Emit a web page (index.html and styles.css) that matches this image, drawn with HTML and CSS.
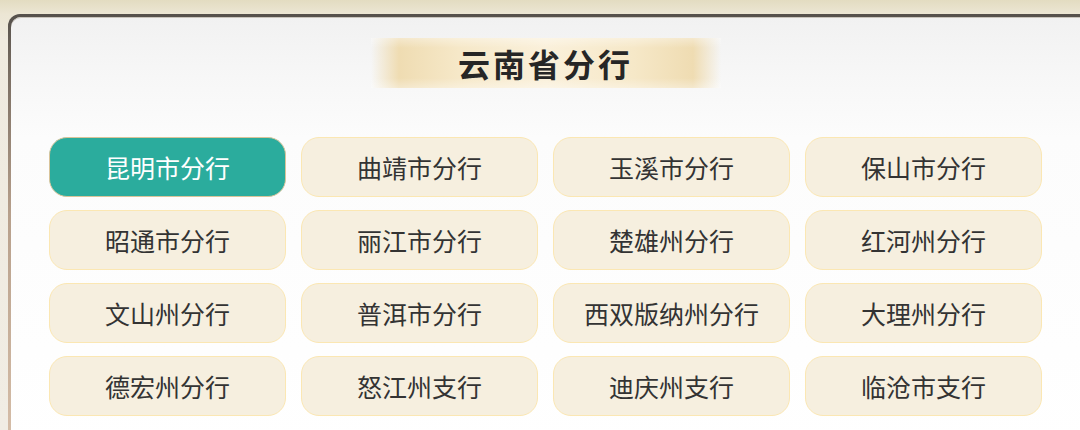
FILE: index.html
```html
<!DOCTYPE html>
<html>

<head>
    <title>云南省分行</title>
    <link rel="stylesheet" href="styles.css">
</head>

<body>
    <div class="page">
        <div class="frame">
            <div class="panel">
                <div class="content">
                    <div class="title-row">
                        <h1 class="title">云南省分行</h1>
                    </div>
                    <div class="grid">
                        <a class="branch active">昆明市分行</a>
                        <a class="branch">曲靖市分行</a>
                        <a class="branch">玉溪市分行</a>
                        <a class="branch">保山市分行</a>
                        <a class="branch">昭通市分行</a>
                        <a class="branch">丽江市分行</a>
                        <a class="branch">楚雄州分行</a>
                        <a class="branch">红河州分行</a>
                        <a class="branch">文山州分行</a>
                        <a class="branch">普洱市分行</a>
                        <a class="branch">西双版纳州分行</a>
                        <a class="branch">大理州分行</a>
                        <a class="branch">德宏州分行</a>
                        <a class="branch">怒江州支行</a>
                        <a class="branch">迪庆州支行</a>
                        <a class="branch">临沧市支行</a>
                    </div>
                </div>
            </div>
        </div>
    </div>
</body>

</html>
```

FILE: styles.css
```css
body {
    margin: 0;
    font-family: "Noto Sans CJK SC", "Noto Sans", sans-serif;
    color: #333333;
    overflow: hidden;
}

.page {
    height: 430px;
    overflow: hidden;
    padding: 14px 0 0 8px;
    box-sizing: border-box;
    background: linear-gradient(#e3dcc1 0px, #ece6d4 14px, #efeadf 40px, #f1ede4 100%);
}

.frame {
    margin-right: -30px;
    height: 440px;
    padding: 3px 0 0 3px;
    border-radius: 12px 0 0 0;
    background: linear-gradient(#55504b 0px, #7a6e63 60px, #b7a08c 200px, #d8c0aa 100%);
}

.panel {
    height: 100%;
    border-radius: 10px 0 0 0;
    background: linear-gradient(#f1f1f1 0px, #f7f7f7 60px, #fcfcfc 120px, #ffffff 100%);
    box-shadow: inset 0 1px 0 #c9c4bc;
}

.content {
    width: 993px;
    padding: 21px 0 0 38px;
}

.title-row {
    display: flex;
    justify-content: center;
}

.title {
    margin: 0;
    width: 350px;
    height: 50px;
    line-height: 50px;
    text-align: center;
    font-size: 32px;
    font-weight: 700;
    letter-spacing: 3px;
    color: #262626;
    background:
        linear-gradient(rgba(255, 255, 255, 0.35), rgba(255, 255, 255, 0) 20%, rgba(255, 255, 255, 0) 80%, rgba(255, 255, 255, 0.35)),
        linear-gradient(90deg, rgba(241, 222, 180, 0) 0%, #efdcb2 8%, #f6e8c8 25%, #faf0da 50%, #f6e8c8 75%, #efdcb2 92%, rgba(241, 222, 180, 0) 100%);
}

.grid {
    margin-top: 49px;
    display: grid;
    grid-template-columns: repeat(4, 237px);
    column-gap: 15px;
    row-gap: 13px;
}

.branch {
    height: 60px;
    box-sizing: border-box;
    display: flex;
    align-items: center;
    justify-content: center;
    border: 1px solid #fbe7b3;
    border-radius: 18px;
    background: #f6efdf;
    font-size: 25px;
    color: #333333;
}

.branch.active {
    background: #2bac9d;
    border-color: #d9c49a;
    color: #ffffff;
}
```
